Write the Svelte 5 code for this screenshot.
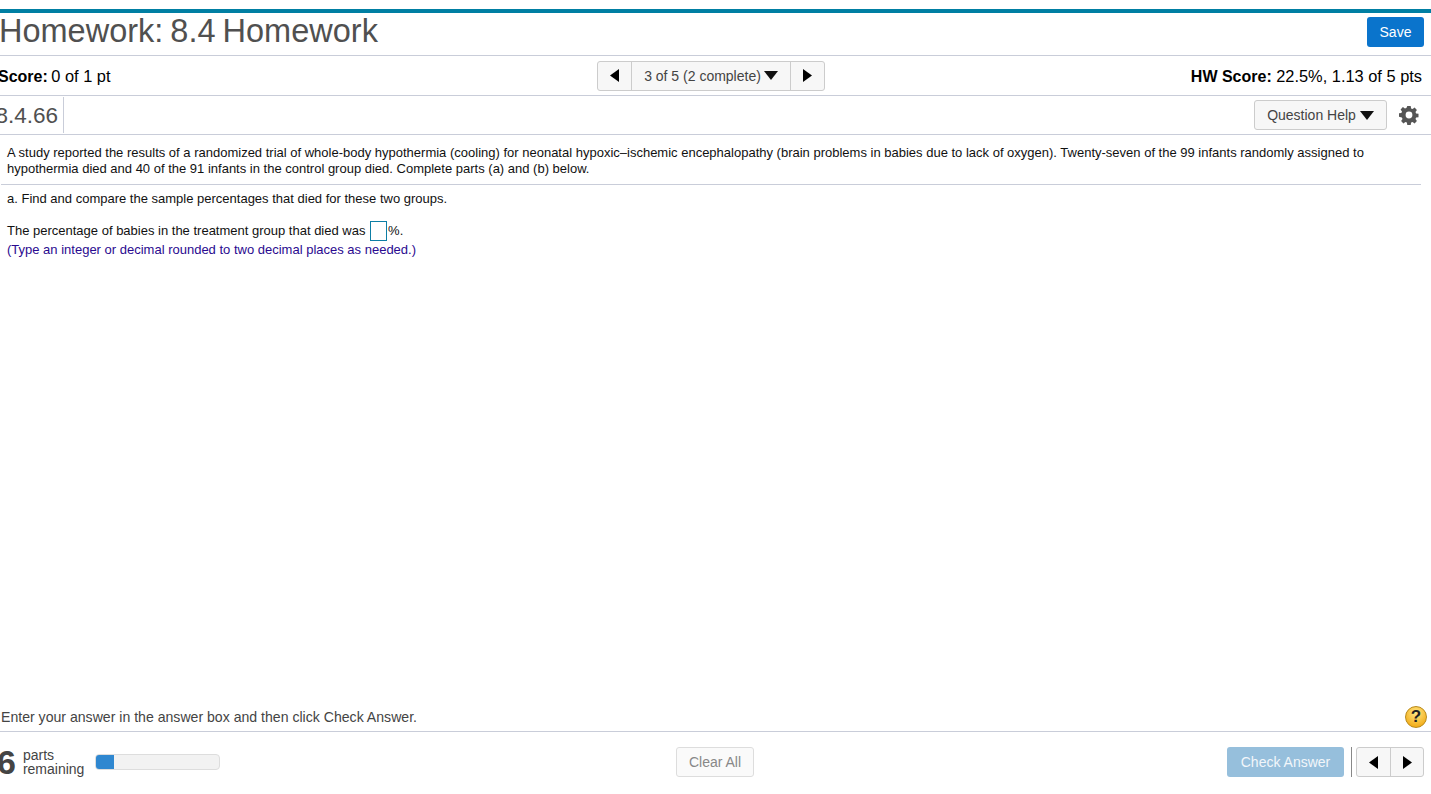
<script>
  const tri = { left: '9,0 9,13 0,6.5', right: '0,0 0,13 9,6.5' };
</script>

{#snippet arrow(dir)}
  <svg class="arrow" width="9" height="13" viewBox="0 0 9 13"><polygon points={tri[dir]} fill="#000" /></svg>
{/snippet}
{#snippet caret()}
  <svg class="caret" width="14" height="9" viewBox="0 0 14 9"><polygon points="0,0 14,0 7,9" fill="#111" /></svg>
{/snippet}

<div class="page">
  <header class="title-row">
    <h1>Homework: 8.4 Homework</h1>
    <button class="save">Save</button>
  </header>

  <div class="score-row">
    <div class="score"><b>Score:</b> <span class="val">0 of 1 pt</span></div>
    <div class="pager">
      <span class="pg-btn">{@render arrow('left')}</span>
      <span class="pg-mid">3 of 5 (2 complete) {@render caret()}</span>
      <span class="pg-btn">{@render arrow('right')}</span>
    </div>
    <div class="hw"><b>HW Score:</b> <span class="val">22.5%, 1.13 of 5 pts</span></div>
  </div>

  <div class="q-row">
    <div class="q-num">8.4.66</div>
    <div class="q-tools">
      <button class="help">Question Help {@render caret()}</button>
      <svg class="gear" width="20" height="20" viewBox="0 0 20 20">
        <path fill="#555" fill-rule="evenodd" d="M8.3 1h3.4l.4 2.4 1.5.6 2-1.4 2.3 2.3-1.4 2 .6 1.5 2.4.4v3.4l-2.4.4-.6 1.5 1.4 2-2.3 2.3-2-1.4-1.5.6-.4 2.4H8.3l-.4-2.4-1.5-.6-2 1.4-2.3-2.3 1.4-2-.6-1.5L0 11.7V8.3l2.4-.4.6-1.5-1.4-2 2.3-2.3 2 1.4 1.5-.6zM10 6.6a3.4 3.4 0 1 0 0 6.8 3.4 3.4 0 0 0 0-6.8z"/>
      </svg>
    </div>
  </div>

  <main class="content">
    <p class="intro">A study reported the results of a randomized trial of whole-body hypothermia (cooling) for neonatal hypoxic–ischemic encephalopathy (brain problems in babies due to lack of oxygen). Twenty-seven of the 99 infants randomly assigned to hypothermia died and 40 of the 91 infants in the control group died. Complete parts (a) and (b) below.</p>
    <hr />
    <p class="part">a. Find and compare the sample percentages that died for these two groups.</p>
    <p class="answer">The percentage of babies in the treatment group that died was <span class="box"></span>%.</p>
    <p class="hint">(Type an integer or decimal rounded to two decimal places as needed.)</p>
  </main>

  <div class="instr">
    <span>Enter your answer in the answer box and then click Check Answer.</span>
    <span class="qmark">?</span>
  </div>

  <footer class="foot">
    <div class="remain">
      <span class="big">6</span>
      <span class="parts">parts<br />remaining</span>
      <span class="bar"><span class="fill"></span></span>
    </div>
    <button class="clear">Clear All</button>
    <div class="foot-right">
      <button class="check">Check Answer</button>
      <span class="sep"></span>
      <div class="pager small">
        <span class="pg-btn">{@render arrow('left')}</span>
        <span class="pg-btn">{@render arrow('right')}</span>
      </div>
    </div>
  </footer>
</div>

<style>
  :global(body) { margin: 0; background: #fff; }
  .page {
    width: 1431px; height: 794px; overflow: hidden; box-sizing: border-box; padding-top: 9px;
    font-family: "Liberation Sans", Arial, sans-serif; color: #000; display: flex; flex-direction: column;
  }
  button { font-family: inherit; cursor: pointer; }
  .title-row {
    height: 42px; border-top: 4px solid #007fa3; border-bottom: 1px solid #c9cdd9;
    display: flex; justify-content: space-between; align-items: flex-start; padding-right: 7px;
  }
  h1 { margin: 0 0 0 -1px; font-size: 32.5px; font-weight: 400; color: #505050; line-height: 36px; word-spacing: -2px; }
  .save {
    width: 57px; height: 30px; margin-top: 4px; background: #0a74cc; color: #fff; border: 0; border-radius: 3px; font-size: 14px; padding: 0;
  }
  .score-row {
    height: 39px; border-bottom: 1px solid #c9cdd9; display: grid; grid-template-columns: 1fr auto 1fr; align-items: center;
    font-size: 16px; padding-right: 9px;
  }
  .score, .hw { padding-top: 1px; }
  .score { margin-left: -2px; }
  .score .val { margin-left: -1px; }
  .val { font-size: 16.4px; }
  .hw { text-align: right; }
  .pager {
    display: inline-flex; height: 30px; box-sizing: border-box; border: 1px solid #ccc; border-radius: 3px; background: #f7f7f7;
  }
  .pg-btn { display: flex; align-items: center; justify-content: center; width: 33px; box-sizing: border-box; }
  .pg-mid {
    width: 160px; box-sizing: border-box; border-left: 1px solid #ccc; border-right: 1px solid #ccc; display: flex; align-items: center; justify-content: center; gap: 3px;
    font-size: 14px; color: #444;
  }
  .q-row {
    height: 38px; border-bottom: 1px solid #c9cdd9; display: flex; justify-content: space-between; align-items: center;
  }
  .q-num {
    height: 36px; width: 63px; border-right: 1px solid #c9cdd9; text-indent: -4.5px;
    font-size: 22.5px; line-height: 38px; color: #505050; overflow: hidden;
  }
  .q-tools { display: flex; align-items: center; gap: 12px; padding-right: 12px; }
  .help {
    width: 133px; height: 30px; padding: 0; background: #f7f7f7; border: 1px solid #ccc; border-radius: 3px; color: #444; font-size: 14px;
    display: flex; align-items: center; justify-content: center; gap: 4px;
  }
  .content { flex: 1; font-size: 13px; line-height: 16px; color: #111; }
  .intro { margin: 10px 10px 0 7px; width: 1375px; }
  hr { border: 0; border-top: 1px solid #c9cdd9; margin: 7px 10px 0 1px; }
  .part { margin: 6px 0 0 7px; }
  .answer { margin: 13px 0 0 7px; height: 22px; display: flex; align-items: center; white-space: pre; }
  .box { display: inline-block; box-sizing: border-box; width: 17px; height: 20px; border: 1px solid #0d7ea5; margin: 0 1px 0 1px; }
  .hint { margin: 0 0 0 7px; color: #2a0a8f; }
  .instr {
    height: 28px; box-sizing: content-box; border-bottom: 1px solid #c9cdd9; display: flex; justify-content: space-between; align-items: center;
    font-size: 14.1px; color: #444; padding: 4px 4px 0 1px; margin-top: -2px;
  }
  .qmark {
    width: 22px; height: 22px; border-radius: 50%; background: radial-gradient(circle at 50% 30%, #ffe684, #f2a912 85%);
    border: 1px solid #b98a1a; box-sizing: border-box; display: flex; align-items: center; justify-content: center;
    font-weight: 700; font-size: 17px; color: #222;
  }
  .foot { height: 62px; position: relative; display: flex; align-items: flex-start; justify-content: space-between; padding: 15px 7px 0 0; box-sizing: border-box; }
  .remain { display: flex; align-items: center; height: 30px; color: #444; }
  .big { font-size: 34px; font-weight: 700; margin-left: -3px; line-height: 30px; }
  .parts { font-size: 14px; line-height: 14px; margin-left: 7px; }
  .bar { width: 125px; height: 16px; margin-left: 11px; background: #f2f2f2; border: 1px solid #ddd; border-radius: 4px; overflow: hidden; display: block; box-sizing: border-box; }
  .fill { display: block; width: 18px; height: 100%; background: #2f87d0; }
  .clear {
    position: absolute; left: 676px; top: 15px; width: 78px; height: 30px; padding: 0; background: #fafafa; border: 1px solid #ddd; border-radius: 3px; color: #888; font-size: 14px;
  }
  .foot-right { display: flex; align-items: center; height: 30px; }
  .check { width: 117px; height: 30px; padding: 0; background: #96bfdc; border: 0; border-radius: 3px; color: #f2f6fa; font-size: 14px; }
  .sep { width: 1px; height: 30px; background: #888; margin-left: 7px; }
  .pager.small { margin-left: 4px; }
  .pager.small .pg-btn + .pg-btn { border-left: 1px solid #ccc; }
</style>
